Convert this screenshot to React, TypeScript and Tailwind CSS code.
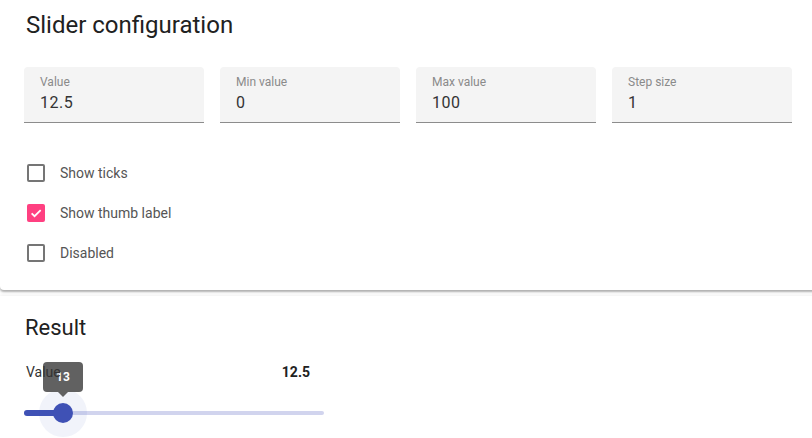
import React from 'react';

// Slider configuration form + result preview, Material-ish look.
const FIELDS = [
  { label: 'Value', value: '12.5' },
  { label: 'Min value', value: '0' },
  { label: 'Max value', value: '100' },
  { label: 'Step size', value: '1' },
];

const OPTIONS = [
  { label: 'Show ticks', checked: false },
  { label: 'Show thumb label', checked: true },
  { label: 'Disabled', checked: false },
];

function Checkbox(props: { checked: boolean }) {
  if (props.checked) {
    return (
      <span className="w-[18px] h-[18px] rounded-[2px] bg-[#ff4081] flex items-center justify-center">
        <svg viewBox="0 0 24 24" className="w-[14px] h-[14px]" fill="none" stroke="white" strokeWidth="3">
          <path d="M4.5 12.5l5 5L20 7" />
        </svg>
      </span>
    );
  }
  return <span className="w-[18px] h-[18px] rounded-[2px] border-2 border-[#757575] box-border" />;
}

export default function App() {
  const pct = 0.13;
  return (
    <div className="w-[812px] h-[438px] overflow-hidden bg-white text-[#212121]" style={{ fontFamily: 'Roboto, "Liberation Sans", sans-serif' }}>
      <div className="w-[830px] h-[290px] bg-white rounded-b-[4px] shadow-[0_2px_2px_rgba(0,0,0,0.25),0_1px_4px_rgba(0,0,0,0.12)] px-6 pt-[9px]">
        <h2 className="text-[24px] leading-[32px] font-normal ml-[2px]">Slider configuration</h2>
        <div className="flex gap-4 mt-[26px] w-[768px]">
          {FIELDS.map(f => (
            <div key={f.label} className="flex-1 h-[56px] bg-[#f4f4f4] rounded-t-[4px] border-b border-[#8c8c8c] px-4 pt-[8px]">
              <div className="text-[12px] leading-[14px] text-[#8a8a8a]">{f.label}</div>
              <div className="text-[16px] leading-[22px] text-[#333] mt-[3px] tracking-[0.5px]">{f.value}</div>
            </div>
          ))}
        </div>
        <div className="mt-[41px] flex flex-col gap-[22px] ml-[3px]">
          {OPTIONS.map(o => (
            <div key={o.label} className="flex items-center gap-[15px] h-[18px]">
              <Checkbox checked={o.checked} />
              <span className="text-[14px] text-[#555]">{o.label}</span>
            </div>
          ))}
        </div>
      </div>
      <div className="mt-[6px] w-[830px] h-[200px] bg-white shadow-[0_-1px_3px_rgba(0,0,0,0.06)] px-6 pt-[17px]">
        <h2 className="text-[22px] leading-[30px] font-normal ml-[1px]">Result</h2>
        <div className="relative z-10 flex w-[300px] items-center justify-between mt-[19px] ml-[2px] pr-[16px]">
          <span className="text-[14px] text-[#333]">Value</span>
          <span className="text-[14px] font-bold">12.5</span>
        </div>
        <div className="relative w-[300px] h-[48px] mt-[6px]">
          <div className="absolute left-0 right-0 top-[22px] h-[4px] rounded-full bg-[#d1d4ee]" />
          <div className="absolute left-0 top-[21px] h-[6px] rounded-full bg-[#3f51b5]" style={{ width: `${pct * 300}px` }} />
          <div className="absolute w-[48px] h-[48px] rounded-full bg-[#3f51b5]/[0.07] top-0" style={{ left: `${pct * 300 - 24}px` }} />
          <div className="absolute w-[20px] h-[20px] rounded-full bg-[#3f51b5] top-[14px]" style={{ left: `${pct * 300 - 10}px` }} />
          <div className="absolute -top-[27px] w-[40px] flex flex-col items-center" style={{ left: `${pct * 300 - 20}px` }}>
            <div className="w-[40px] h-[30px] rounded-[4px] bg-[#616161] text-white text-[12px] font-bold flex items-center justify-center leading-[14px]">13</div>
            <div className="w-0 h-0 border-l-[5px] border-r-[5px] border-t-[5px] border-l-transparent border-r-transparent border-t-[#616161]" />
          </div>
        </div>
      </div>
    </div>
  );
}
